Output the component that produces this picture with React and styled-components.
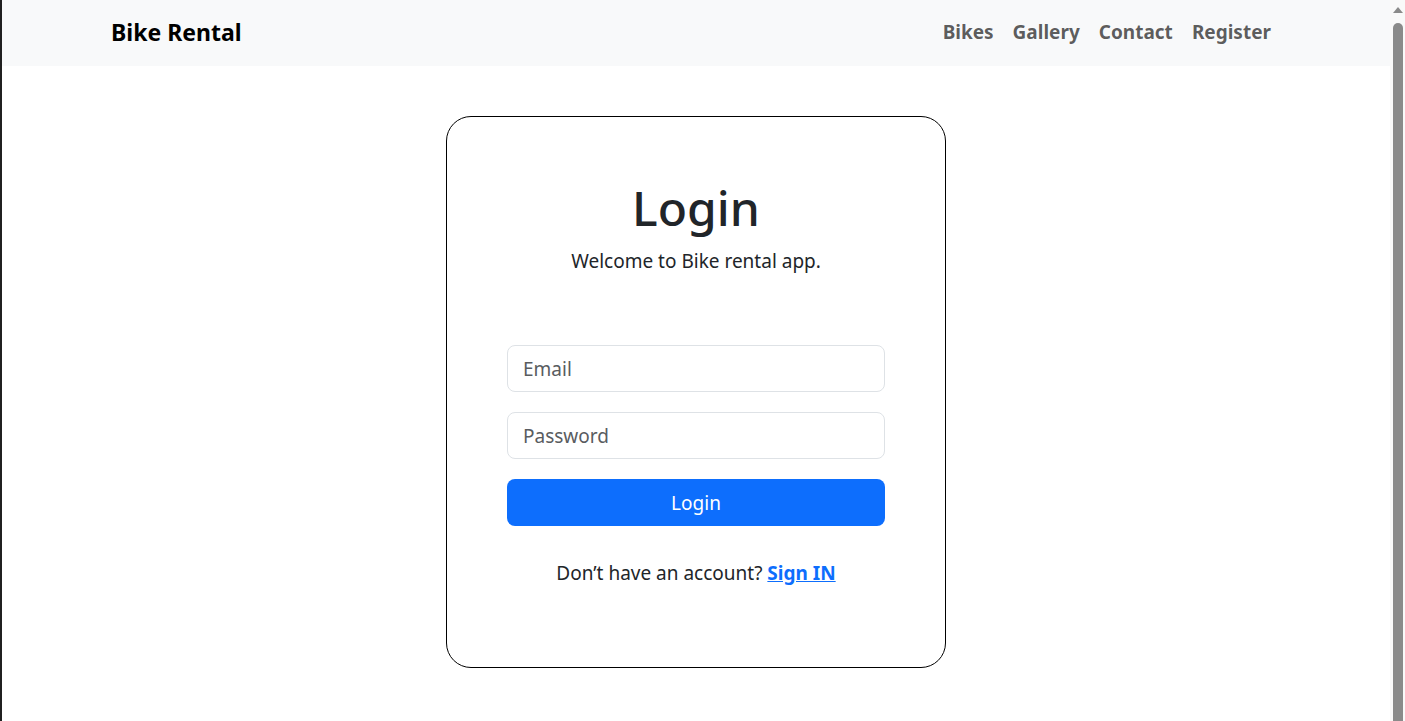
import React from "react";
import styled, { createGlobalStyle } from "styled-components";

const GlobalStyle = createGlobalStyle`
  body {
    margin: 0;
    padding-right: 15px;
    border-left: 2px solid #202020;
    font-family: "Segoe UI", "Noto Sans", "Liberation Sans", sans-serif;
    color: #212529;
    background: #fff;
  }
  * {
    box-sizing: border-box;
  }
`;

// decorative window scrollbar seen in the screenshot, lies over the page edge
const ScrollTrack = styled.div`
  position: fixed;
  top: 0;
  right: 0;
  width: 15px;
  height: 100vh;
  background: #f9f9f9;
`;

const ScrollArrow = styled.div`
  position: absolute;
  top: 7px;
  left: 3px;
  width: 0;
  height: 0;
  border-left: 5px solid transparent;
  border-right: 5px solid transparent;
  border-bottom: 6px solid #8a8a8a;
`;

const ScrollThumb = styled.div`
  position: absolute;
  top: 23px;
  bottom: -10px;
  left: 3px;
  width: 10px;
  border-radius: 5px;
  background: #8a8a8a;
`;

const Navbar = styled.nav`
  background-color: #f8f9fa;
  height: 66px;
`;

const NavContainer = styled.div`
  max-width: 1194px;
  height: 100%;
  margin: 0 auto;
  padding: 0 12px 3px;
  display: flex;
  align-items: center;
  justify-content: space-between;
`;

const Brand = styled.a`
  font-size: 23px;
  font-weight: 700;
  color: #000;
  text-decoration: none;
`;

const NavLinks = styled.ul`
  display: flex;
  gap: 3px;
  list-style: none;
  margin: 0 2px 0 0;
  padding: 0;
`;

const NavLink = styled.a`
  display: block;
  padding: 0 8px;
  font-size: 19px;
  font-weight: 700;
  color: rgba(0, 0, 0, 0.65);
  text-decoration: none;
`;

const Main = styled.main`
  padding: 50px 0 60px;
`;

const Card = styled.div`
  width: 500px;
  margin: 0 auto;
  border: 1px solid #000;
  border-radius: 25px;
  padding: 57px 60px 79px;
  text-align: center;
`;

const Title = styled.h1`
  font-size: 48px;
  font-weight: 500;
  line-height: 67px;
  margin: 0 0 5px;
`;

const Lead = styled.p`
  font-size: 19px;
  line-height: 30px;
  margin: 0 0 69px;
`;

const Form = styled.form`
  display: flex;
  flex-direction: column;
  gap: 20px;
`;

const Input = styled.input`
  width: 100%;
  height: 47px;
  padding: 0 15px;
  font-family: inherit;
  font-size: 19px;
  color: #212529;
  border: 1px solid #dee2e6;
  border-radius: 8px;
  outline: none;

  &::placeholder {
    color: #595c5f;
  }
`;

const Button = styled.button`
  width: 100%;
  height: 47px;
  font-family: inherit;
  font-size: 19px;
  color: #fff;
  background-color: #0d6efd;
  border: none;
  border-radius: 8px;
  cursor: pointer;
`;

const Footer = styled.p`
  font-size: 19px;
  line-height: 30px;
  margin: 32px 0 0;
`;

const SignLink = styled.a`
  font-weight: 700;
  color: #0d6efd;
  text-decoration: underline;
`;

const links = ["Bikes", "Gallery", "Contact", "Register"];

const App = () => {
  return (
    <>
      <GlobalStyle />
      <Navbar>
        <NavContainer>
          <Brand href="#">Bike Rental</Brand>
          <NavLinks>
            {links.map((l) => (
              <li key={l}>
                <NavLink href="#">{l}</NavLink>
              </li>
            ))}
          </NavLinks>
        </NavContainer>
      </Navbar>
      <Main>
        <Card>
          <Title>Login</Title>
          <Lead>Welcome to Bike rental app.</Lead>
          <Form onSubmit={(e) => e.preventDefault()}>
            <Input type="email" placeholder="Email" />
            <Input type="password" placeholder="Password" />
            <Button type="submit">Login</Button>
          </Form>
          <Footer>
            Don’t have an account? <SignLink href="#">Sign IN</SignLink>
          </Footer>
        </Card>
      </Main>
      <ScrollTrack>
        <ScrollArrow />
        <ScrollThumb />
      </ScrollTrack>
    </>
  );
};

export default App;
